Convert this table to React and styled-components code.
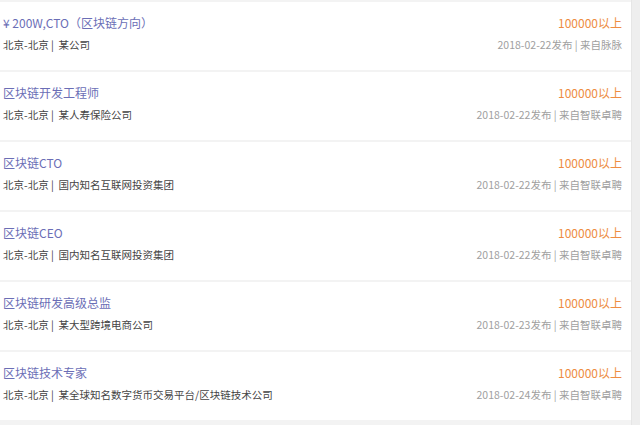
import React from 'react';
import styled, { createGlobalStyle } from 'styled-components';

const jobs = [
  { title: '¥ 200W,CTO（区块链方向）', company: '某公司', date: '2018-02-22', source: '来自脉脉' },
  { title: '区块链开发工程师', company: '某人寿保险公司', date: '2018-02-22', source: '来自智联卓聘' },
  { title: '区块链CTO', company: '国内知名互联网投资集团', date: '2018-02-22', source: '来自智联卓聘' },
  { title: '区块链CEO', company: '国内知名互联网投资集团', date: '2018-02-22', source: '来自智联卓聘' },
  { title: '区块链研发高级总监', company: '某大型跨境电商公司', date: '2018-02-23', source: '来自智联卓聘' },
  { title: '区块链技术专家', company: '某全球知名数字货币交易平台/区块链技术公司', date: '2018-02-24', source: '来自智联卓聘' },
];

const App = () => (
  <>
    <GlobalStyle />
    <Page>
      <List>
        {jobs.map((job) => (
          <Row key={job.title}>
            <Line>
              <Title>{job.title}</Title>
              <Salary>100000以上</Salary>
            </Line>
            <Line>
              <Place>北京-北京 | &nbsp;{job.company}</Place>
              <Published>{job.date}发布 | {job.source}</Published>
            </Line>
          </Row>
        ))}
      </List>
      <Scrollbar />
    </Page>
  </>
);

const GlobalStyle = createGlobalStyle`
  html, body {
    margin: 0;
    padding: 0;
    background: #f3f3f3;
    font-family: "Noto Sans CJK SC", "Liberation Sans", sans-serif;
  }
`;

const Page = styled.div`
  display: flex;
  height: 425px;
  overflow: hidden;
`;

const List = styled.div`
  flex: 1;
  display: flex;
  flex-direction: column;
  gap: 2px;
  padding-top: 2px;
`;

const Scrollbar = styled.div`
  width: 8px;
  background: #eeeeee;
  border-left: 1px solid #e6e6e6;
`;

const Row = styled.div`
  background: #fff;
  height: 68px;
  box-sizing: border-box;
  padding: 12px 9px 0 3px;
  display: flex;
  flex-direction: column;
  gap: 5px;
`;

const Line = styled.div`
  display: flex;
  justify-content: space-between;
  align-items: center;
`;

const Title = styled.span`
  font-size: 12px;
  line-height: 18px;
  color: #6b6eb6;
`;

const Salary = styled.span`
  font-size: 12px;
  line-height: 18px;
  color: #ee8c42;
`;

const Place = styled.span`
  font-size: 10.5px;
  line-height: 16px;
  color: #444;
`;

const Published = styled.span`
  font-size: 10.5px;
  line-height: 16px;
  color: #a0a0a0;
`;

export default App;
